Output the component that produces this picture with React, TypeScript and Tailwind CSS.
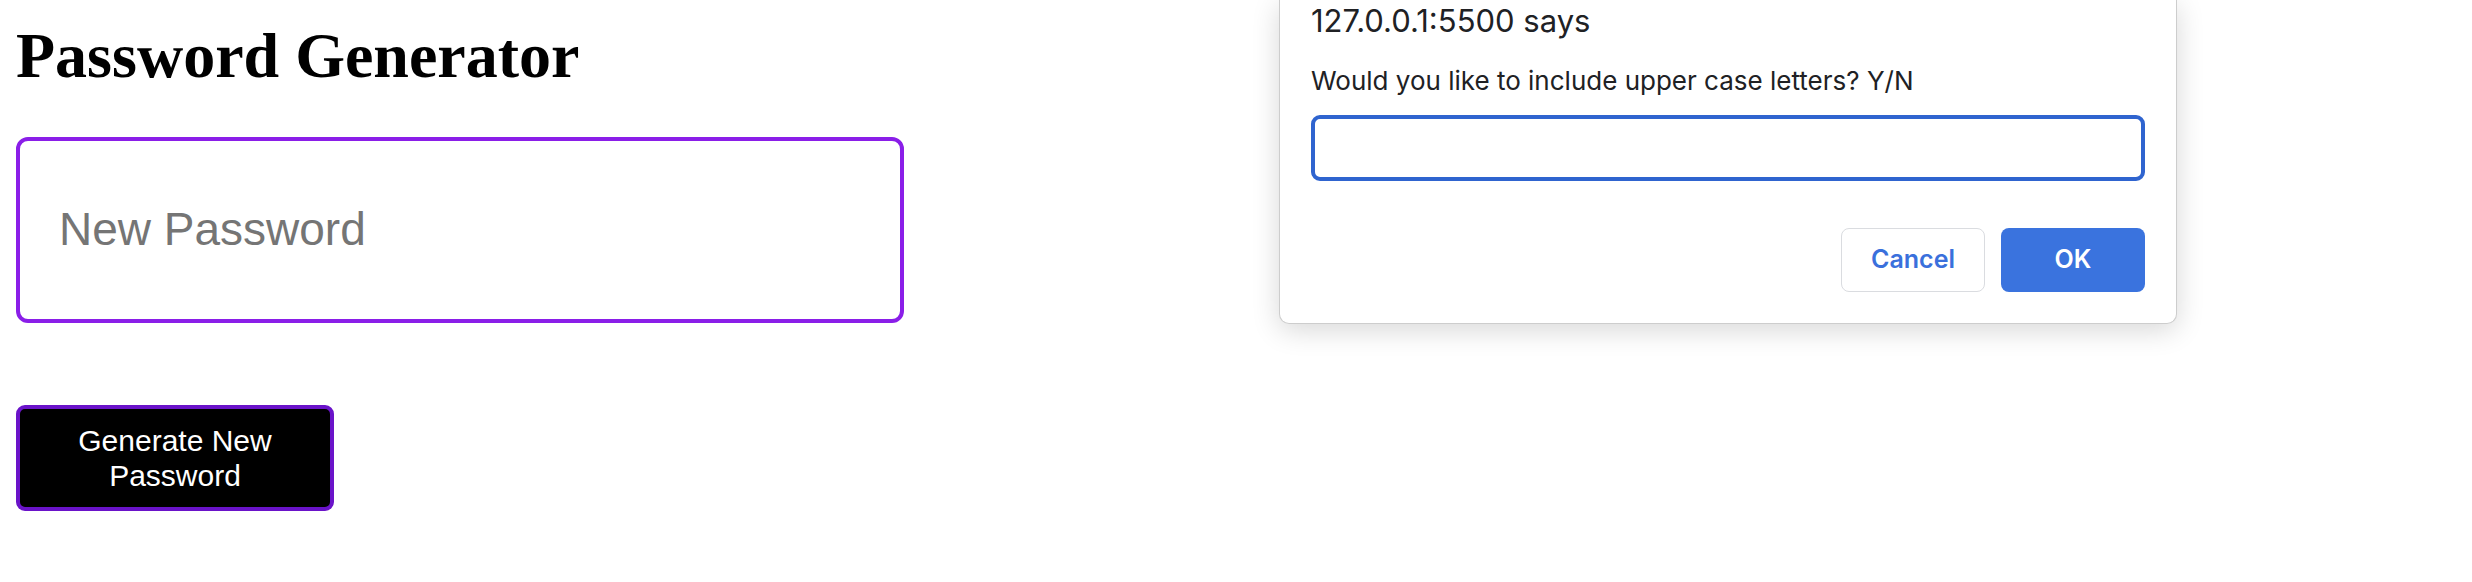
import React, { useState } from "react";

// password generator page with the browser's prompt() dialog open over it
export default function App() {
  const [password] = useState("");
  const [answer, setAnswer] = useState("");

  return (
    <div className="relative min-h-[582px] w-full overflow-hidden bg-white">
      <div className="flex flex-col items-start pl-4">
        <h1 className="mt-[19px] font-['Liberation_Serif',serif] text-[64px] font-bold leading-[74px] text-black">
          Password Generator
        </h1>
        <textarea
          readOnly
          value={password}
          placeholder="New Password"
          className="mt-[44px] h-[186px] w-[888px] resize-none overflow-hidden rounded-[12px] border-4 border-[#8a1ee8] bg-white pl-[39px] pt-[62px] font-['Liberation_Sans',Arial,sans-serif] text-[46px] leading-[53px] text-black outline-none placeholder:text-[#757575]"
        />
        <button
          type="button"
          className="mt-[82px] w-[318px] rounded-[9px] border-4 border-[#6a13c9] bg-black py-[14px] text-center font-['Liberation_Sans',Arial,sans-serif] text-[30px] leading-[35px] text-white"
        >
          Generate New Password
        </button>
      </div>

      <div className="absolute left-[1279px] top-0 w-[898px] rounded-b-[10px] border border-t-0 border-[#cdcdcd] bg-white px-[31px] pb-[31px] pt-[3px] font-['Inter','Noto_Sans',sans-serif] shadow-[0_6px_28px_rgba(0,0,0,0.16)]">
        <div className="text-[31px] leading-[36px] text-[#202124]">127.0.0.1:5500 says</div>
        <div className="mt-[26px] text-[26px] leading-[31px] text-[#202124]">
          Would you like to include upper case letters? Y/N
        </div>
        <input
          value={answer}
          onChange={(e) => setAnswer(e.target.value)}
          className="mt-[19px] block h-[66px] w-full rounded-[9px] border-4 border-[#2f64cf] bg-white px-3 text-[26px] text-[#202124] outline-none"
        />
        <div className="mt-[47px] flex justify-end gap-4">
          <button
            type="button"
            className="h-[64px] w-[144px] rounded-[8px] border border-[#dadce0] bg-white text-[25px] font-semibold text-[#3a70dc]"
          >
            Cancel
          </button>
          <button
            type="button"
            className="h-[64px] w-[144px] rounded-[8px] bg-[#3a73de] text-[25px] font-semibold text-white"
          >
            OK
          </button>
        </div>
      </div>
    </div>
  );
}
